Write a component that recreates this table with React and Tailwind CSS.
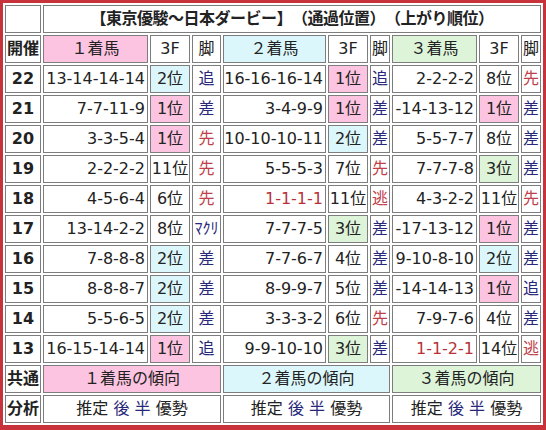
import React from 'react';

const PINK = 'bg-[#fcc4e0]';
const BLUE = 'bg-[#dcf7fb]';
const GREEN = 'bg-[#ddf4d9]';

// rank -> background
const rankBg = (r) => {
  if (r === '1位') return PINK;
  if (r === '2位') return BLUE;
  if (r === '3位') return GREEN;
  return 'bg-white';
};

// 脚質 -> text colour
const styleColor = (s) => (s === '先' || s === '逃' ? 'text-[#c0404a]' : 'text-[#28287a]');

const rows = [
  ['22', ['13-14-14-14', '2位', '追'], ['16-16-16-14', '1位', '追'], ['2-2-2-2', '8位', '先']],
  ['21', ['7-7-11-9', '1位', '差'], ['3-4-9-9', '1位', '差'], ['-14-13-12', '1位', '差']],
  ['20', ['3-3-5-4', '1位', '先'], ['10-10-10-11', '2位', '差'], ['5-5-7-7', '8位', '差']],
  ['19', ['2-2-2-2', '11位', '先'], ['5-5-5-3', '7位', '先'], ['7-7-7-8', '3位', '差']],
  ['18', ['4-5-6-4', '6位', '先'], ['1-1-1-1', '11位', '逃'], ['4-3-2-2', '11位', '先']],
  ['17', ['13-14-2-2', '8位', 'ﾏｸﾘ'], ['7-7-7-5', '3位', '差'], ['-17-13-12', '1位', '差']],
  ['16', ['7-8-8-8', '2位', '差'], ['7-7-6-7', '4位', '差'], ['9-10-8-10', '2位', '差']],
  ['15', ['8-8-8-7', '2位', '差'], ['8-9-9-7', '5位', '差'], ['-14-14-13', '1位', '追']],
  ['14', ['5-5-6-5', '2位', '差'], ['3-3-3-2', '6位', '先'], ['7-9-7-6', '4位', '差']],
  ['13', ['16-15-14-14', '1位', '追'], ['9-9-10-10', '3位', '差'], ['1-1-2-1', '14位', '逃']],
];

const cell = 'border border-[#7d7d7d] flex items-center overflow-hidden whitespace-nowrap';

const Group = ({ data }) => {
  const [pos, rank, kyaku] = data;
  const red = pos.startsWith('1-1-');
  return (
    <>
      <div className={`${cell} justify-end pr-[2px] bg-white ${red ? 'text-[#b8323a]' : ''}`}>{pos}</div>
      <div className={`${cell} justify-center ${rankBg(rank)}`}>{rank}</div>
      <div className={`${cell} justify-center bg-white ${styleColor(kyaku)}`}>{kyaku}</div>
    </>
  );
};

const Analysis = () => (
  <div className={`${cell} col-span-3 justify-center bg-white`}>
    <span>
      推定 <span className="text-[#28287a]">後</span> <span className="text-[#28287a]">半</span> 優勢
    </span>
  </div>
);

export default function App() {
  return (
    <div
      className="w-[546px] h-[430px] bg-[#c8323a] pt-[3px] px-[3px] pb-[5px] text-[16px] leading-none text-[#222] [text-spacing-trim:space-all]"
      style={{ fontFamily: '"DejaVu Sans", "Noto Sans CJK JP", sans-serif' }}
    >
      <div className="bg-white h-full grid grid-cols-[36px_105px_40px_29px_103px_40px_20px_85px_40px_20px] auto-rows-[28px] gap-[2px] p-[2px]">
        {/* title */}
        <div className={`${cell} bg-white`}></div>
        <div className={`${cell} col-span-9 justify-center bg-white font-bold tracking-[-0.5px]`}>
          【東京優駿～日本ダービー】（通過位置）（上がり順位）
        </div>

        {/* header */}
        <div className={`${cell} justify-center bg-white font-bold`}>開催</div>
        <div className={`${cell} justify-center ${PINK}`}>１着馬</div>
        <div className={`${cell} justify-center bg-white`}>3F</div>
        <div className={`${cell} justify-center bg-white`}>脚</div>
        <div className={`${cell} justify-center ${BLUE}`}>２着馬</div>
        <div className={`${cell} justify-center bg-white`}>3F</div>
        <div className={`${cell} justify-center bg-white`}>脚</div>
        <div className={`${cell} justify-center ${GREEN}`}>３着馬</div>
        <div className={`${cell} justify-center bg-white`}>3F</div>
        <div className={`${cell} justify-center bg-white`}>脚</div>

        {rows.map(([year, a, b, c]) => (
          <React.Fragment key={year}>
            <div className={`${cell} justify-center bg-white font-bold`}>{year}</div>
            <Group data={a} />
            <Group data={b} />
            <Group data={c} />
          </React.Fragment>
        ))}

        {/* footer */}
        <div className={`${cell} justify-center bg-white font-bold`}>共通</div>
        <div className={`${cell} col-span-3 justify-center ${PINK}`}>１着馬の傾向</div>
        <div className={`${cell} col-span-3 justify-center ${BLUE}`}>２着馬の傾向</div>
        <div className={`${cell} col-span-3 justify-center ${GREEN}`}>３着馬の傾向</div>

        <div className={`${cell} justify-center bg-white font-bold`}>分析</div>
        <Analysis />
        <Analysis />
        <Analysis />
      </div>
    </div>
  );
}
